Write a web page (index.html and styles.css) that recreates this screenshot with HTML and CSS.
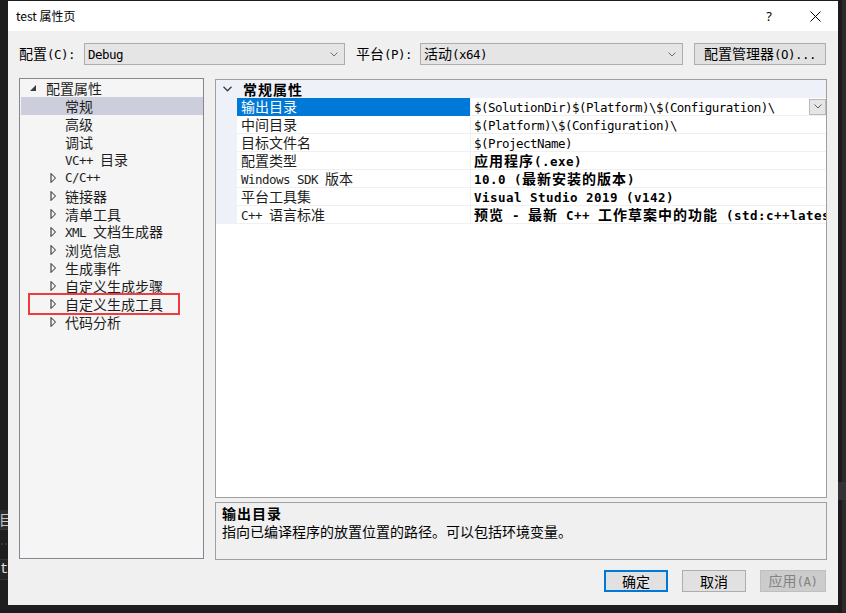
FILE: index.html
```html
<!DOCTYPE html>
<html lang="zh-CN">
<head>
<meta charset="utf-8">
<title>test 属性页</title>
<link rel="stylesheet" href="styles.css">
</head>
<body>
<div class="desk">
  <div class="side-left">
    <div class="sl-gap"></div>
    <div class="sl-band sl-b1">目录</div>
    <div class="sl-sep"></div>
    <div class="sl-dots"></div>
    <div class="sl-band sl-b2">test</div>
  </div>

  <div class="dialog">
    <div class="titlebar">
      <span class="title">test 属性页</span>
      <span class="tb-btn tb-help">?</span>
      <span class="tb-btn tb-close">
        <svg width="11" height="11" viewBox="0 0 11 11"><path d="M0.5 0.5 L10.5 10.5 M10.5 0.5 L0.5 10.5" stroke="#000" stroke-width="1" fill="none"/></svg>
      </span>
    </div>

    <div class="content">
      <div class="config-row">
        <span class="lbl">配置<span class="a">(C):</span></span>
        <div class="combo combo-cfg">
          <span class="combo-text"><span class="a">Debug</span></span>
          <svg class="chev" width="8" height="5" viewBox="0 0 8 5"><path d="M0.5 0.5 L4 4 L7.5 0.5" stroke="#707070" fill="none"/></svg>
        </div>
        <span class="lbl lbl-plat">平台<span class="a">(P):</span></span>
        <div class="combo combo-plat">
          <span class="combo-text">活动<span class="a">(x64)</span></span>
          <svg class="chev" width="8" height="5" viewBox="0 0 8 5"><path d="M0.5 0.5 L4 4 L7.5 0.5" stroke="#707070" fill="none"/></svg>
        </div>
        <button class="btn btn-mgr">配置管理器<span class="a">(O)...</span></button>
      </div>

      <div class="main">
        <div class="tree">
          <div class="ti l0"><span class="tw"><svg width="6" height="6" viewBox="0 0 6 6"><path d="M6 0 L6 6 L0 6 Z" fill="#3c3c3c"/></svg></span><span>配置属性</span></div>
          <div class="ti l1 sel"><span class="tw"></span><span>常规</span></div>
          <div class="ti l1"><span class="tw"></span><span>高级</span></div>
          <div class="ti l1"><span class="tw"></span><span>调试</span></div>
          <div class="ti l1"><span class="tw"></span><span><span class="a">VC++ </span>目录</span></div>
          <div class="ti l1"><span class="tw"><svg class="tri" width="7" height="10" viewBox="0 0 7 10"><path d="M1 0.5 L5.5 5 L1 9.5 Z" stroke="#1e1e1e" fill="none"/></svg></span><span class="a">C/C++</span></div>
          <div class="ti l1"><span class="tw"><svg class="tri" width="7" height="10" viewBox="0 0 7 10"><path d="M1 0.5 L5.5 5 L1 9.5 Z" stroke="#1e1e1e" fill="none"/></svg></span><span>链接器</span></div>
          <div class="ti l1"><span class="tw"><svg class="tri" width="7" height="10" viewBox="0 0 7 10"><path d="M1 0.5 L5.5 5 L1 9.5 Z" stroke="#1e1e1e" fill="none"/></svg></span><span>清单工具</span></div>
          <div class="ti l1"><span class="tw"><svg class="tri" width="7" height="10" viewBox="0 0 7 10"><path d="M1 0.5 L5.5 5 L1 9.5 Z" stroke="#1e1e1e" fill="none"/></svg></span><span><span class="a">XML </span>文档生成器</span></div>
          <div class="ti l1"><span class="tw"><svg class="tri" width="7" height="10" viewBox="0 0 7 10"><path d="M1 0.5 L5.5 5 L1 9.5 Z" stroke="#1e1e1e" fill="none"/></svg></span><span>浏览信息</span></div>
          <div class="ti l1"><span class="tw"><svg class="tri" width="7" height="10" viewBox="0 0 7 10"><path d="M1 0.5 L5.5 5 L1 9.5 Z" stroke="#1e1e1e" fill="none"/></svg></span><span>生成事件</span></div>
          <div class="ti l1"><span class="tw"><svg class="tri" width="7" height="10" viewBox="0 0 7 10"><path d="M1 0.5 L5.5 5 L1 9.5 Z" stroke="#1e1e1e" fill="none"/></svg></span><span>自定义生成步骤</span></div>
          <div class="ti l1"><span class="tw"><svg class="tri" width="7" height="10" viewBox="0 0 7 10"><path d="M1 0.5 L5.5 5 L1 9.5 Z" stroke="#1e1e1e" fill="none"/></svg></span><span>自定义生成工具</span></div>
          <div class="ti l1"><span class="tw"><svg class="tri" width="7" height="10" viewBox="0 0 7 10"><path d="M1 0.5 L5.5 5 L1 9.5 Z" stroke="#1e1e1e" fill="none"/></svg></span><span>代码分析</span></div>
          <div class="highlight-box"></div>
        </div>

        <div class="right">
          <div class="grid">
            <div class="g-head">
              <span class="g-chev"><svg width="9" height="6" viewBox="0 0 9 6"><path d="M0.5 0.8 L4.5 4.8 L8.5 0.8" stroke="#3c3c3c" stroke-width="1.3" fill="none"/></svg></span>
              <span class="g-cat b">常规属性</span>
            </div>
            <div class="g-row">
              <span class="g-gut"></span>
              <span class="g-name sel">输出目录</span>
              <span class="g-val"><span class="g-txt"><span class="a">$(SolutionDir)$(Platform)\$(Configuration)\</span></span>
                <span class="g-drop"><svg width="8" height="5" viewBox="0 0 8 5"><path d="M0.5 0.5 L4 4 L7.5 0.5" stroke="#606060" fill="none"/></svg></span></span>
            </div>
            <div class="g-row">
              <span class="g-gut"></span>
              <span class="g-name">中间目录</span>
              <span class="g-val"><span class="g-txt"><span class="a">$(Platform)\$(Configuration)\</span></span></span>
            </div>
            <div class="g-row">
              <span class="g-gut"></span>
              <span class="g-name">目标文件名</span>
              <span class="g-val"><span class="g-txt"><span class="a">$(ProjectName)</span></span></span>
            </div>
            <div class="g-row">
              <span class="g-gut"></span>
              <span class="g-name">配置类型</span>
              <span class="g-val"><span class="g-txt b">应用程序<span class="a">(.exe)</span></span></span>
            </div>
            <div class="g-row">
              <span class="g-gut"></span>
              <span class="g-name"><span class="a">Windows SDK </span>版本</span>
              <span class="g-val"><span class="g-txt b"><span class="a">10.0 (</span>最新安装的版本<span class="a">)</span></span></span>
            </div>
            <div class="g-row">
              <span class="g-gut"></span>
              <span class="g-name">平台工具集</span>
              <span class="g-val"><span class="g-txt b"><span class="a">Visual Studio 2019 (v142)</span></span></span>
            </div>
            <div class="g-row">
              <span class="g-gut"></span>
              <span class="g-name"><span class="a">C++ </span>语言标准</span>
              <span class="g-val"><span class="g-txt b">预览<span class="a"> - </span>最新<span class="a"> C++ </span>工作草案中的功能<span class="a"> (std:c++latest)</span></span></span>
            </div>
          </div>
          <div class="desc">
            <div class="desc-title b">输出目录</div>
            <div class="desc-text">指向已编译程序的放置位置的路径。可以包括环境变量。</div>
          </div>
        </div>
      </div>

      <div class="footer">
        <button class="btn btn-ok">确定</button>
        <button class="btn btn-cancel">取消</button>
        <button class="btn btn-apply" disabled>应用<span class="a">(A)</span></button>
      </div>
    </div>
  </div>

  <div class="side-right"></div>
</div>
</body>
</html>
```

FILE: styles.css
```css
* { box-sizing: border-box; }
html, body { margin: 0; padding: 0; }
body {
  background: #1e1e1e;
  width: 846px;
  height: 613px;
  overflow: hidden;
}
.desk { display: flex; height: 613px; }

/* background editor fragments */
.side-left {
  width: 8px;
  flex: none;
  display: flex;
  flex-direction: column;
  overflow: hidden;
  background: #1e1e1e;
}
.sl-gap { height: 510px; flex: none; }
.sl-band {
  height: 19px;
  flex: none;
  white-space: nowrap;
  overflow: hidden;
  line-height: 19px;
  font-size: 14px;
}
.sl-b1 { background: #2d2d30; color: #c8c8c8; font-family: "Noto Sans CJK SC", sans-serif; text-indent: -1px; }
.sl-sep { height: 6px; flex: none; border-top: 1px solid #3a3a3a; }
.sl-dots { height: 25px; flex: none; border-bottom: 1px solid #333; background: radial-gradient(circle, #555 0.6px, transparent 0.8px) 0 7px / 4px 4px repeat-x; }
.sl-b2 { background: #252526; color: #e0e0e0; font-family: "Liberation Mono", monospace; height: 20px; border-bottom: 1px solid #333; }

.side-right {
  flex: 1;
  background:
    linear-gradient(to bottom, transparent 482px, #333337 482px, #333337 500px, transparent 500px),
    linear-gradient(to right, #1b1b1b 0, #1b1b1b 4px, #2a2a2a 4px);
}

/* dialog */
.dialog {
  width: 830px;
  height: 604px;
  margin-top: 1px;
  flex: none;
  background: #f0f0f0;
  display: flex;
  flex-direction: column;
  font-family: "Noto Sans CJK SC", sans-serif;
  font-size: 14px;
  line-height: 18px;
  color: #000;
}
.a {
  font-family: "DejaVu Sans Mono", "Noto Sans CJK SC", monospace;
  font-size: 12.5px;
  letter-spacing: -0.53px;
}
.b { font-weight: bold; letter-spacing: 1px; }
.b .a { letter-spacing: 0.47px; }

.titlebar {
  height: 30px;
  flex: none;
  background: #fff;
  display: flex;
  align-items: center;
}
.title {
  padding-left: 8px;
  font-size: 12px;
  flex: 1;
}
.tb-btn {
  width: 46px;
  height: 30px;
  display: flex;
  align-items: center;
  justify-content: center;
  font-size: 12px;
}
.tb-help { font-family: "Noto Sans", sans-serif; font-size: 13px; }

.content {
  padding: 0 12px 0 11px;
  display: flex;
  flex-direction: column;
}

.config-row {
  display: flex;
  align-items: center;
  height: 22px;
  margin-top: 12px;
}
.lbl { white-space: nowrap; }
.combo {
  height: 22px;
  border: 1px solid #adadad;
  background: #e5e5e5;
  display: flex;
  align-items: center;
  padding: 0 6px 0 3px;
}
.combo-text { flex: 1; white-space: nowrap; }
.combo-cfg { width: 261px; margin-left: 9px; }
.lbl-plat { margin-left: 11px; }
.combo-plat { width: 263px; margin-left: 8px; }
.combo .chev { flex: none; }

.btn {
  height: 22px;
  border: 1px solid #adadad;
  background: #e1e1e1;
  font-family: "Noto Sans CJK SC", sans-serif;
  font-size: 14px;
  line-height: 18px;
  color: #000;
  padding: 0;
  white-space: nowrap;
}
.btn-mgr { width: 132px; margin-left: auto; }

.main {
  display: flex;
  margin-top: 13px;
  gap: 11px;
}

.tree {
  position: relative;
  width: 185px;
  height: 481px;
  flex: none;
  border: 1px solid #828790;
  background: #f5f5f5;
  padding: 0 0 0 1px;
  color: #1e1e1e;
}
.ti {
  height: 18px;
  display: flex;
  align-items: center;
  white-space: nowrap;
}
.ti.l0 { padding-left: 7px; }
.ti.l1 { padding-left: 26px; }
.ti.sel { background: #cccedb; }
.tw {
  width: 18px;
  height: 18px;
  flex: none;
  display: flex;
  align-items: center;
}
.l0 .tw { padding-left: 2px; }
.l1 .tw { padding-left: 3px; }

.highlight-box {
  position: absolute;
  left: 8px;
  top: 214px;
  width: 152px;
  height: 22px;
  border: 2px solid #ee3b3b;
}

.right {
  width: 612px;
  flex: none;
  padding-top: 1px;
  display: flex;
  flex-direction: column;
}
.grid {
  height: 419px;
  border: 1px solid #a0a0a0;
  background: #fff;
  overflow: hidden;
}
.g-head {
  height: 18px;
  display: flex;
  align-items: center;
  background: #eef2f8;
}
.g-chev {
  width: 21px;
  display: flex;
  justify-content: center;
  padding-left: 1px;
}
.g-cat { padding-left: 6px; }

.g-row {
  display: grid;
  grid-template-columns: 21px 233px 1fr;
  height: 18px;
}
.g-gut { background: #eef2f8; }
.g-name {
  padding-left: 4px;
  border-bottom: 1px solid #f0f0f0;
  line-height: 17px;
  white-space: nowrap;
  overflow: hidden;
  color: #1e1e1e;
}
.g-name.sel { background: #0078d7; color: #fff; border-bottom-color: #0078d7; }
.g-val {
  border-left: 1px solid #f0f0f0;
  border-bottom: 1px solid #f0f0f0;
  padding-left: 3px;
  display: flex;
  align-items: center;
  overflow: hidden;
  min-width: 0;
}
.g-txt {
  flex: 1;
  white-space: nowrap;
  overflow: hidden;
  line-height: 17px;
}
.g-drop {
  width: 17px;
  height: 16px;
  flex: none;
  border: 1px solid #b9b9b9;
  background: #e6e6e6;
  display: flex;
  align-items: center;
  justify-content: center;
}

.desc {
  height: 58px;
  margin-top: 4px;
  border: 1px solid #a0a0a0;
  padding: 1px 6px;
}

.footer {
  display: flex;
  justify-content: flex-end;
  gap: 14px;
  margin-top: 10px;
}
.btn-ok { width: 64px; border: 2px solid #0078d7; }
.btn-cancel { width: 64px; }
.btn-apply { width: 66px; background: #cccccc; border-color: #bfbfbf; color: #838383; }
```
